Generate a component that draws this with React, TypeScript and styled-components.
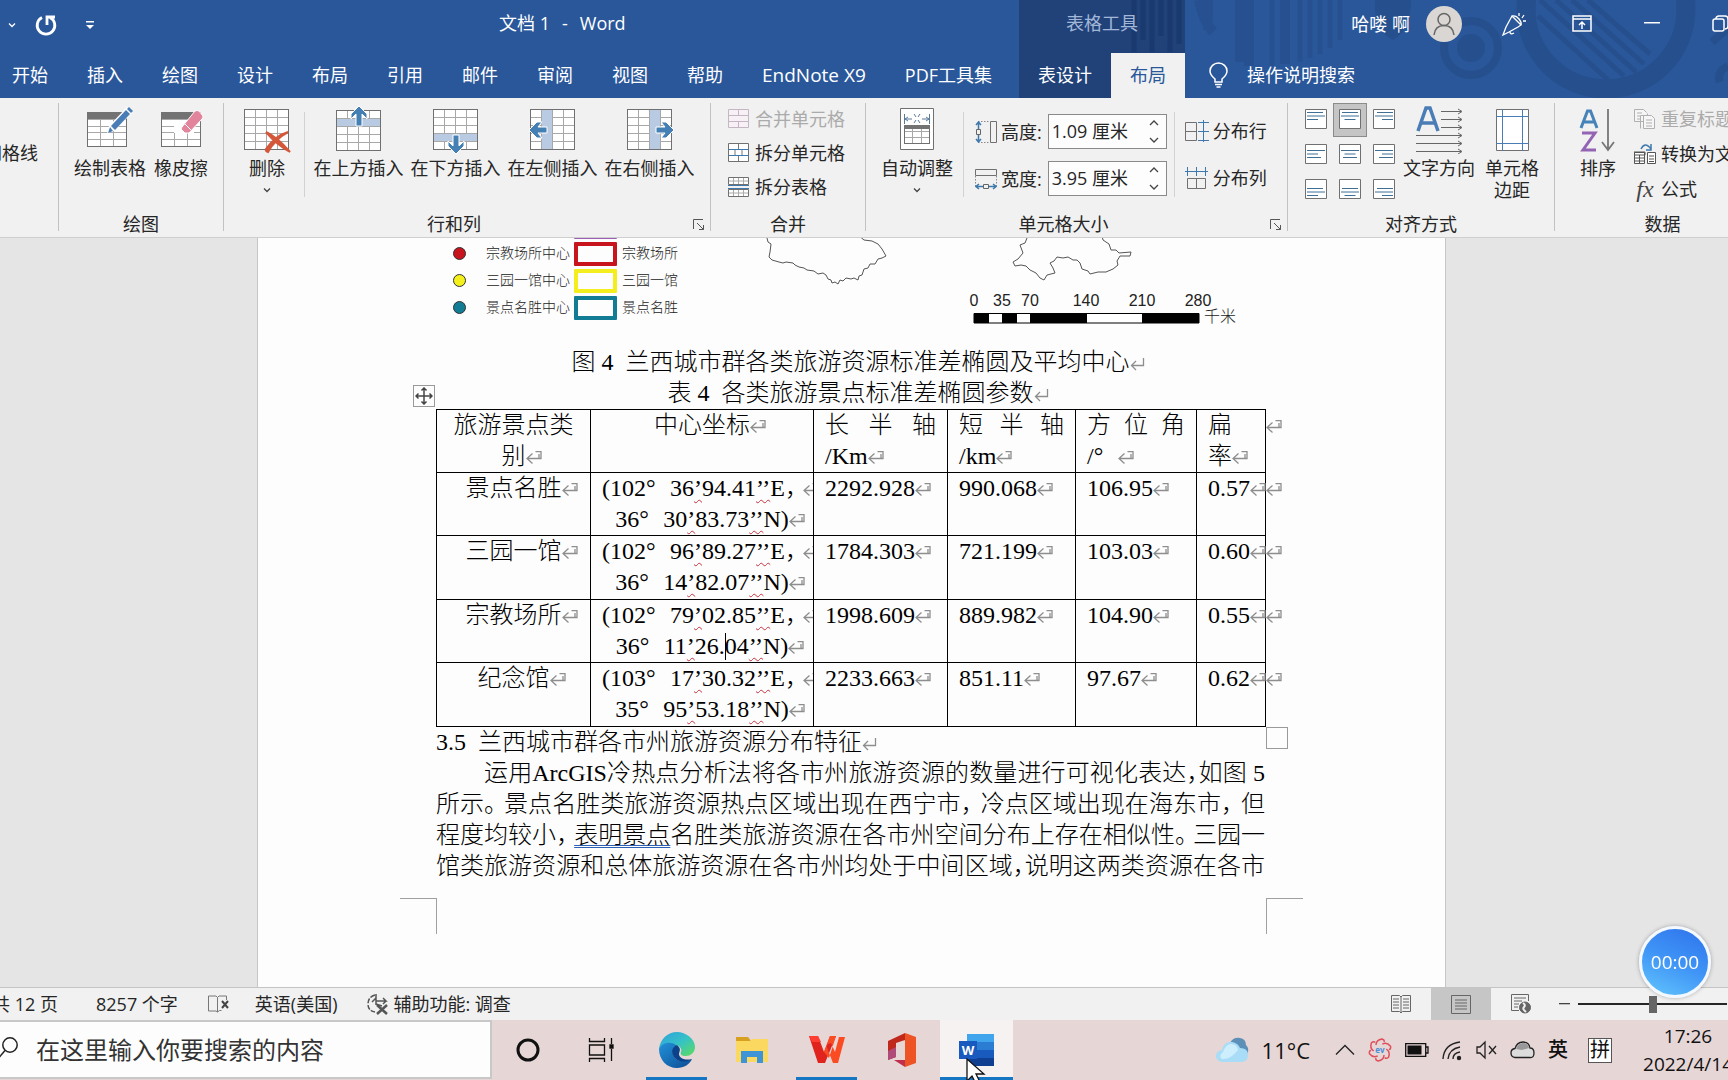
import React from "react";
import styled, { createGlobalStyle, css } from "styled-components";

const ui = `"Open Sans", "Noto Sans CJK SC", sans-serif`;
const serif = `"Liberation Serif", "Noto Sans CJK SC", serif`;

const Global = createGlobalStyle`
  * { box-sizing: border-box; }
  body { margin: 0; overflow: hidden; }
  button { font: inherit; color: inherit; background: none; border: 0; padding: 0; margin: 0; cursor: default; }
  svg { display: block; flex: none; }
`;

const Screen = styled.div`
  display: grid;
  grid-template-rows: auto auto minmax(0, 1fr) auto auto;
  height: 100vh;
  overflow: hidden;
  font: 18px/22px ${ui};
  color: #262626;
`;

/* ---------- title bar and tabs ---------- */

const Header = styled.header`
  position: relative;
  background: #2a579a;
  color: #fff;
  overflow: hidden;
`;
const Pattern = styled.svg`
  position: absolute;
  top: 0;
  right: 0;
`;
const TitleRow = styled.div`
  position: relative;
  display: flex;
  height: 53px;
`;
const QuickAccess = styled.div`
  flex: 0 0 499px;
  display: flex;
  align-items: center;
  gap: 17px;
  padding: 0 0 4px 8px;
`;
const DocTitle = styled.div`
  display: flex;
  gap: 12px;
  flex: 0 0 520px;
  padding-top: 12px;
`;
const ContextTitle = styled.div`
  flex: 0 0 166px;
  padding-top: 12px;
  text-align: center;
  color: #a3b7d8;
  background: rgba(24, 50, 95, 0.55);
`;
const WindowTools = styled.div`
  margin: 0 -4px 0 auto;
  padding-bottom: 6px;
  display: flex;
  align-items: center;
  gap: 52px;
`;
const User = styled.button`
  display: flex;
  align-items: center;
  gap: 16px;
  margin-right: -12px;
`;
const PenIcon = styled.svg`
  overflow: visible;
`;
const TabRow = styled.div`
  position: relative;
  display: flex;
  height: 45px;
`;
const Tabs = styled.nav`
  flex: 0 0 1019px;
  display: flex;
  gap: 39px;
  padding-left: 12px;
`;
const ContextTabs = styled.nav`
  flex: 0 0 166px;
  display: flex;
  background: rgba(24, 50, 95, 0.55);
`;
const Tab = styled.button<{ $wide?: boolean }>`
  white-space: nowrap;
  padding-bottom: 2px;
  ${(p) => p.$wide && css`font-size: 19px;`}
`;
const ContextTab = styled.button<{ $active?: boolean }>`
  flex: 1 1 auto;
  padding-bottom: 2px;
  ${(p) => p.$active && css`background: #f1f1f1; color: #2a579a;`}
`;
const TellMe = styled.button`
  display: flex;
  align-items: center;
  gap: 19px;
  margin-left: 24px;
  padding-bottom: 2px;
`;

/* ---------- ribbon ---------- */

const Ribbon = styled.section`
  display: flex;
  padding: 5px 0 6px;
  background: #f1f1f1;
  border-bottom: 1px solid #cfcfcf;
  overflow: hidden;
`;
const Group = styled.div<{ $w: number }>`
  position: relative;
  flex: 0 0 ${(p) => p.$w}px;
  min-width: 0;
  display: flex;
  flex-direction: column;
  border-right: 1px solid #c2c2c2;
  white-space: nowrap;
`;
const GroupBody = styled.div<{ $pad: number; $end?: boolean }>`
  display: flex;
  align-items: flex-start;
  height: 114px;
  padding-left: ${(p) => p.$pad}px;
  ${(p) => p.$end && css`justify-content: flex-end; align-items: center; padding: 0 20px 14px 0;`}
`;
const GroupName = styled.div<{ $launcher?: boolean }>`
  line-height: 14px;
  text-align: center;
  padding-right: ${(p) => (p.$launcher ? 26 : 0)}px;
`;
const Launcher = styled.button`
  position: absolute;
  right: 5px;
  bottom: 0;
`;
const Big = styled.button<{ $w: number }>`
  flex: 0 0 ${(p) => p.$w}px;
  display: flex;
  flex-direction: column;
  align-items: center;
  padding-top: 3px;
  svg:first-child { margin-bottom: 3px; }
`;
const Split = styled.div<{ $l: number; $r: number }>`
  width: 1px;
  height: 85px;
  margin: 9px ${(p) => p.$r}px 0 ${(p) => p.$l}px;
  background: #d2d2d2;
`;
const Stack = styled.div<{ $gap: number; $ml?: number }>`
  display: grid;
  gap: ${(p) => p.$gap}px;
  margin-left: ${(p) => p.$ml || 0}px;
`;
const Small = styled.button<{ $off?: boolean }>`
  display: flex;
  align-items: center;
  gap: 5px;
  height: 32px;
  color: ${(p) => (p.$off ? "#ababab" : "inherit")};
`;
const SizeGrid = styled.div`
  display: grid;
  gap: 12px;
  padding-top: 11px;
`;
const Field = styled.div`
  display: flex;
  align-items: center;
  height: 35px;
  label { margin: 0 6px 0 4px; }
`;
const Spin = styled.div`
  display: flex;
  width: 119px;
  height: 35px;
  border: 1px solid #8a8a8a;
  background: #fdfdfd;
  input {
    flex: 1;
    min-width: 0;
    border: 0;
    padding: 0 0 2px 3px;
    background: none;
    font: inherit;
    color: inherit;
    outline: 0;
  }
`;
const SpinArrows = styled.div`
  display: grid;
  width: 24px;
  place-items: center;
  button { display: grid; place-items: center; }
`;
const Distribute = styled.button`
  display: flex;
  align-items: center;
  gap: 4px;
  height: 35px;
  padding-bottom: 2px;
`;
const AlignGrid = styled.div`
  display: grid;
  grid-template-columns: repeat(3, 34px);
  grid-auto-rows: 34px;
  row-gap: 1px;
`;
const AlignButton = styled.button<{ $on?: boolean }>`
  display: grid;
  place-items: center;
  padding-bottom: 2px;
  border: 1px solid ${(p) => (p.$on ? "#8c8c8c" : "transparent")};
  background: ${(p) => (p.$on ? "#c5c5c5" : "none")};
`;

/* ---------- document ---------- */

const Workspace = styled.main`
  display: flex;
  justify-content: center;
  padding-right: 25px;
  background: #e5e5e5;
  overflow: hidden;
`;
const Page = styled.article`
  width: 1189px;
  padding: 0 180px 0 178px;
  background: #fdfdfd;
  border: solid #c6c6c6;
  border-width: 0 1px;
  font: 300 24px/31px ${serif};
  color: #000;
`;
const Figure = styled.div`
  display: flex;
  align-items: flex-end;
  height: 109px;
  padding: 0 0 26px 17px;
  overflow: hidden;
`;
const Legend = styled.div`
  display: grid;
  grid-template-columns: 33px 88px 48px auto;
  grid-auto-rows: 27px;
  align-items: center;
  font-size: 14px;
  white-space: nowrap;
  color: #222;
`;
const Dot = styled.i<{ $c: string }>`
  width: 13px;
  height: 13px;
  border-radius: 50%;
  border: 1px solid #333;
  background: ${(p) => p.$c};
`;
const Swatch = styled.i<{ $c: string }>`
  width: 43px;
  height: 24px;
  border: 4px solid ${(p) => p.$c};
  border-radius: 1px;
  grid-column: 3;
`;
const MapDrawing = styled.svg`
  margin: 0 0 -9px 84px;
  overflow: visible;
`;
const FigureEnd = styled.span`
  margin: 0 -18px -14px auto;
`;
const Caption = styled.p`
  margin: 0;
  text-align: center;
  white-space: pre;
`;
const Heading = styled.p`
  margin: 0;
  white-space: pre;
`;
const Paragraph = styled.p`
  margin: 0;
  text-indent: 48px;
  text-align: justify;
  text-align-last: justify;
`;
const Punct = styled.span<{ $w: number }>`
  display: inline-block;
  width: ${(p) => p.$w}px;
  text-indent: 0;
  text-align-last: left;
  white-space: nowrap;
  font-feature-settings: "halt";
`;
const Grammar = styled.span`
  text-decoration: underline double #2c60b4 1px;
  text-underline-offset: 2px;
  text-decoration-skip-ink: none;
`;
const TableBox = styled.div`
  position: relative;
  margin-right: -18px;
`;
const Table = styled.table`
  border-collapse: collapse;
  table-layout: fixed;
  width: 847px;
  th, td {
    height: 63px;
    padding: 0 11px;
    border: 1px solid #000;
    font-weight: 300;
    text-align: left;
    vertical-align: top;
    white-space: nowrap;
  }
  tbody tr:nth-child(even) td { height: 64px; }
  th:first-child, th:nth-child(2), td:nth-child(2) { text-align: center; }
  td:last-child { border: 0; padding: 0; }
`;
const NameHead = styled.th`
  && { white-space: normal; }
  tbody && { text-align: center; }
`;
const Spread = styled.div`
  display: flex;
  justify-content: space-between;
`;
const Degree = styled.span`
  display: inline-block;
  width: 24px;
  text-align: left;
`;
const Misspelt = styled.span`
  text-decoration: underline wavy #c8323c 1px;
  text-underline-offset: 3px;
  text-decoration-skip-ink: none;
`;
const Caret = styled.i`
  display: inline-block;
  width: 1px;
  height: 27px;
  margin-right: -1px;
  vertical-align: -6px;
  background: #000;
`;
const MarkBox = styled.span<{ $cut?: boolean }>`
  display: inline-block;
  width: ${(p) => (p.$cut ? 10 : 16)}px;
  margin-right: -${(p) => (p.$cut ? 10 : 16)}px;
  overflow: hidden;
  text-indent: 0;
  vertical-align: -1px;
`;
const MoveHandle = styled.button`
  position: absolute;
  left: -23px;
  top: -24px;
  width: 22px;
  height: 22px;
  display: grid;
  place-items: center;
  border: 1px solid #9a9a9a;
`;
const ResizeHandle = styled.button`
  position: absolute;
  left: 830px;
  bottom: -22px;
  width: 22px;
  height: 22px;
  border: 1px solid #9a9a9a;
`;
const Crops = styled.div`
  display: flex;
  justify-content: space-between;
  margin: 16px -38px 0 -36px;
`;
const Crop = styled.i<{ $side: "left" | "right" }>`
  width: 37px;
  height: 36px;
  border-top: 1px solid #a0a0a0;
  border-${(p) => p.$side}: 1px solid #a0a0a0;
`;
const Timer = styled.div`
  position: fixed;
  right: 17px;
  bottom: 82px;
  width: 72px;
  height: 72px;
  display: grid;
  place-items: center;
  border: 3px solid #f4f9ff;
  border-radius: 50%;
  background: linear-gradient(205deg, #3179ee 10%, #3f94f6 50%, #5cbcfb 90%);
  box-shadow: 0 0 4px rgba(0, 0, 0, 0.3);
  color: #fff;
  font-size: 19px;
  z-index: 2;
`;

/* ---------- status bar ---------- */

const Status = styled.footer`
  display: flex;
  align-items: center;
  height: 33px;
  border-top: 1px solid #c4c4c4;
  background: #f1f1f1;
  white-space: nowrap;
  overflow: hidden;
`;
const PageCount = styled.button`
  flex: 0 0 58px;
  min-width: 0;
  display: flex;
  justify-content: flex-end;
`;
const StatusItem = styled.button<{ $ml: number }>`
  display: flex;
  align-items: center;
  gap: 4px;
  margin-left: ${(p) => p.$ml}px;
`;
const Views = styled.div`
  display: flex;
  align-self: stretch;
  margin-left: auto;
`;
const View = styled.button<{ $on?: boolean }>`
  width: 60px;
  display: grid;
  place-items: center;
  background: ${(p) => (p.$on ? "#c6c6c6" : "none")};
`;
const ZoomOut = styled.button`
  margin: 0 8px;
`;
const ZoomSlider = styled.input`
  appearance: none;
  width: 149px;
  height: 18px;
  margin: 0 1px 0 0;
  background: linear-gradient(#262626, #262626) center / 100% 2px no-repeat;
  &::-webkit-slider-thumb {
    appearance: none;
    width: 8px;
    height: 17px;
    background: #666;
  }
`;

/* ---------- taskbar ---------- */

const Taskbar = styled.footer`
  display: flex;
  height: 60px;
  background: #e6d6d6;
  overflow: hidden;
`;
const Search = styled.label`
  display: flex;
  align-items: center;
  gap: 18px;
  flex: 0 0 492px;
  height: 59px;
  margin-right: 2px;
  border: solid #c8c8c8;
  border-width: 2px 2px 2px 0;
  background: #fdfdfd;
  overflow: hidden;
  input {
    flex: 1;
    min-width: 0;
    border: 0;
    padding: 0;
    background: none;
    font: 24px/32px ${ui};
    outline: 0;
  }
  input::placeholder { color: #333; opacity: 1; }
  svg { margin: 0 0 6px 0; }
`;
const TaskButton = styled.button<{ $open?: boolean; $on?: boolean; $narrow?: boolean }>`
  position: relative;
  width: ${(p) => (p.$narrow ? 69 : 73)}px;
  margin-right: 2px;
  display: grid;
  place-items: center;
  background: ${(p) => (p.$on ? "#f6f2f2" : "none")};
  ${(p) =>
    (p.$open || p.$on) &&
    css`
      &::after {
        content: "";
        position: absolute;
        bottom: 0;
        left: ${p.$on ? 0 : 6}px;
        right: ${p.$on ? 0 : 6}px;
        height: 3px;
        background: #1576c4;
      }
    `}
`;
const Pointer = styled.svg`
  position: absolute;
  left: 26px;
  top: 38px;
  z-index: 1;
`;
const Tray = styled.div`
  display: flex;
  align-items: center;
  margin: 0 -5px 0 auto;
  gap: 13px;
  color: #111;
`;
const Weather = styled.button`
  display: flex;
  align-items: center;
  gap: 12px;
  margin-right: 12px;
  font-size: 22px;
`;
const Lang = styled.button`
  font-size: 20px;
  font-weight: 500;
`;
const Ime = styled.button`
  width: 24px;
  height: 25px;
  margin-left: 7px;
  border: 1px solid #555;
  background: #fff;
  font-size: 20px;
`;
const Clock = styled.button`
  margin-left: 18px;
  font-size: 19px;
  line-height: 28px;
  text-align: center;
`;

/* ---------- icons ---------- */

const Chevron = ({ up, w = 8, c = "#444", h = 22 }: { up?: boolean; w?: number; c?: string; h?: number }) => (
  <svg width={w + 2} height={h} viewBox={`0 0 ${w + 2} ${h}`} fill="none" stroke={c} strokeWidth="1.3">
    <path
      d={
        up
          ? `M1 ${h / 2 + w / 4}L${w / 2 + 1} ${h / 2 - w / 4}L${w + 1} ${h / 2 + w / 4}`
          : `M1 ${h / 2 - w / 4}L${w / 2 + 1} ${h / 2 + w / 4}L${w + 1} ${h / 2 - w / 4}`
      }
    />
  </svg>
);

const Sheet = ({ x, y, w, h, cols, rows, fill = "#fff" }: any) => {
  const lines = [];
  for (let i = 1; i < cols; i++) lines.push(`M${x + Math.round((w * i) / cols)} ${y}v${h}`);
  for (let i = 1; i < rows; i++) lines.push(`M${x} ${y + Math.round((h * i) / rows)}h${w}`);
  return (
    <g fill="none">
      <rect x={x} y={y} width={w} height={h} fill={fill} />
      <path d={lines.join("")} stroke="#a8a8a8" />
      <rect x={x} y={y} width={w} height={h} stroke="#707070" />
    </g>
  );
};

const Icon48 = ({ children }: { children: React.ReactNode }) => (
  <svg width="48" height="48" viewBox="0 0 48 48">{children}</svg>
);

const DrawTable = () => (
  <Icon48>
    <Sheet x={1.5} y={6.5} w={39} h={34} cols={3} rows={5} />
    <path d="M1 6h40v7H1z" fill="#737373" />
    <path d="M21 27l2-7L41 1l6 5-19 19z" fill="#fff" />
    <path d="M22 27l2-6 3 4zM25 20L40 4l4 4-15 16zM41 3l2-2 4 4-2 2z" fill="#4a7db5" />
  </Icon48>
);
const Eraser = () => (
  <Icon48>
    <Sheet x={4.5} y={6.5} w={39} h={34} cols={3} rows={5} />
    <path d="M4 6h40v7H4z" fill="#737373" />
    <path d="M17 14h20v13H17z" fill="#fff" />
    <path d="M25 21L38 5q2-1 4 0l4 5q0 2-1 3L32 27h-4l-4-4z" fill="#e2849c" stroke="#fff" />
    <path d="M28 18l6 6" stroke="#fff" />
  </Icon48>
);
const DeleteTable = () => (
  <Icon48>
    <Sheet x={1.5} y={3.5} w={44} h={40} cols={4} rows={5} />
    <path d="M23 26q11 5 24 20-14-8-24-20M45 26Q32 33 25 46q-3-1-2-3 9-13 22-17" fill="#d4573a" stroke="#d4573a" strokeWidth="2" />
  </Icon48>
);
const arrowPaths: Record<string, string> = {
  up: "M24 0l8 8v5l-5-5v12h-6V8l-5 5V8z",
  down: "M24 48l8-8v-5l-5 5V29h-6v11l-5-5v5z",
  left: "M0 24l8-8h5l-4 5h9v6H9l4 5H8z",
  right: "M48 24l-8-8h-5l4 5h-9v6h9l-4 5h5z",
};
const InsertIcon = ({ dir }: { dir: "up" | "down" | "left" | "right" }) => (
  <Icon48>
    <Sheet x={1.5} y={dir === "up" ? 4.5 : 3.5} w={44} h={40} cols={4} rows={5} />
    {dir === "up" && <path d="M2 13h43v7H2z" fill="#b9cbe2" />}
    {dir === "down" && <path d="M2 28h43v7H2z" fill="#b9cbe2" />}
    {dir === "left" && <path d="M13 4h10v39H13z" fill="#b9cbe2" />}
    {dir === "right" && <path d="M24 4h10v39H24z" fill="#b9cbe2" />}
    <path d={arrowPaths[dir]} fill="#4580b4" stroke="#fff" strokeWidth="1" />
  </Icon48>
);
const AutoFit = () => (
  <Icon48>
    <path d="M7.5 2.5h33v41h-33z" fill="#fff" stroke="#707070" />
    <Sheet x={11.5} y={19.5} w={25} h={18} cols={3} rows={3} />
    <path d="M11 19h26v4H11z" fill="#737373" />
    <path d="M11.5 8v10M36.5 8v10M12 13h7M36 13h-7M15 11l-3 2 3 2M33 11l3 2-3 2M21 8l2 3M27 8l-2 3M21 17l2-3M27 17l-2-3" fill="none" stroke="#5a7a99" />
  </Icon48>
);
const TextDirection = () => (
  <Icon48>
    <path d="M3 25L11 2h4l8 23M6 17h13" fill="none" stroke="#4a7db5" strokeWidth="3.5" />
    <path d="M26 5.500h20M26 13.500h20M26 21.500h20M1 29.500h45M1 37.500h45M1 45.500h45M43 3l4 2.500-4 2.500M43 11l4 2.500-4 2.500M43 19l4 2.500-4 2.500M43 27l4 2.500-4 2.500M43 35l4 2.500-4 2.500M43 43l4 2.500-4 2.500" fill="none" stroke="#666" />
  </Icon48>
);
const Margins = () => (
  <Icon48>
    <path d="M8.500 3.500h32v41h-32z" fill="#fff" stroke="#707070" />
    <path d="M14.500 3v42M34.500 3v42M8 10.500h33M8 37.500h33" stroke="#4a7db5" />
  </Icon48>
);
const SortIcon = () => (
  <Icon48>
    <path d="M7 22L13.500 5h3L23 22M9.500 16h11" fill="none" stroke="#4583b8" strokeWidth="3" />
    <path d="M8 27h13L9 44h13" fill="none" stroke="#9464b4" strokeWidth="3" />
    <path d="M34 3v40M28 36l6 8 6-8" fill="none" stroke="#777" strokeWidth="1.800" />
  </Icon48>
);

const Icon22 = ({ children, w = 22 }: { children: React.ReactNode; w?: number }) => (
  <svg width={w} height="22" viewBox={`0 0 ${w} 22`} fill="none">{children}</svg>
);
const MergeIcon = () => (
  <Icon22>
    <path d="M.5 1.500h20v18H.5zM.5 7.500h20M.5 13.500h20M10.500 2v5M10.500 14v5" stroke="#c4b6c2" fill="#f7f1f5" />
  </Icon22>
);
const SplitCells = () => (
  <Icon22>
    <path d="M.5 1.500h20v18H.5z" stroke="#707070" fill="#fff" />
    <path d="M10.500 2v5M10.500 14v5M7 8v5M14 8v5" stroke="#777" />
    <path d="M1 7.500h20M1 13.500h20" stroke="#3f78ad" />
  </Icon22>
);
const SplitTable = () => (
  <Icon22>
    <path d="M.5 1.500h20v7H.5zM.5 13.500h20v7H.5z" stroke="#707070" fill="#fff" />
    <path d="M5.500 2v6M10.500 2v6M15.500 2v6M5.500 14v6M10.500 14v6M15.500 14v6M1 5h19M1 17h19" stroke="#aaa" />
    <path d="M0 9.500h21M0 12.500h21" stroke="#3f78ad" />
  </Icon22>
);
const HeightIcon = () => (
  <Icon22>
    <path d="M15.500.5h6v21h-6z" stroke="#707070" />
    <path d="M3 .5h12M3 21.500h12" stroke="#888" strokeDasharray="1.500 1.500" />
    <path d="M3.500 1v7M3.500 14v7M1 4l2.500-3L6 4M1 18l2.500 3L6 18" stroke="#3f78ad" strokeWidth="1.500" />
    <path d="M1.500 8.500h4v5h-4z" stroke="#666" />
  </Icon22>
);
const WidthIcon = () => (
  <Icon22>
    <path d="M.5 1.500h21v6H.5z" stroke="#707070" />
    <path d="M.5 8v10M21.500 8v10" stroke="#888" strokeDasharray="1.500 1.500" />
    <path d="M1 18.500h7M14 18.500h7M4 16l-3 2.500L4 21M18 16l3 2.500-3 2.500" stroke="#3f78ad" strokeWidth="1.500" />
    <path d="M8.500 16.500h5v4h-5z" stroke="#666" />
  </Icon22>
);
const DistRows = () => (
  <Icon22 w={24}>
    <path d="M.5 2.500h11v18H.5zM.5 11.500h11" stroke="#707070" />
    <path d="M18.500 0v22M13 2.500h11M13 11.500h11M13 20.500h11" stroke="#3f78ad" />
  </Icon22>
);
const DistCols = () => (
  <Icon22 w={24}>
    <path d="M2.500 11.500h18v10h-18zM11.500 12v9" stroke="#707070" />
    <path d="M0 4.500h23M2.500 0v9M11.500 0v9M20.500 0v9" stroke="#3f78ad" />
  </Icon22>
);
const RepeatIcon = () => (
  <Icon22>
    <path d="M9 13.500H.5V1.500h9l3 3M6.500 20.500v-13h7V5.500M9.500 7.500h8l3 3v10h-11z" stroke="#b0b0b0" fill="#f6f6f6" />
    <path d="M12 12h6M12 15h6M12 18h6M3 5h5M3 8h3M3 11h3" stroke="#b0b0b0" />
  </Icon22>
);
const ConvertIcon = () => (
  <Icon22>
    <path d="M.5 9.500h10v11H.5zM13.500 9.500h8v11h-8z" stroke="#555" fill="#fff" />
    <path d="M0 9h11v3H0zM1 15h9M1 18h9M5.500 12v8M15 13h5M15 16h5M15 18.500h5" stroke="#555" />
    <path d="M7 6q4-8 10 0M17 1v6h-5" stroke="#3f78ad" strokeWidth="1.500" />
  </Icon22>
);
const FormulaIcon = styled.em`
  width: 22px;
  font: italic 24px/24px "Liberation Serif", serif;
  color: #444;
`;
const AlignIcon = ({ v, h }: { v: number; h: number }) => {
  const top = [3.5, 6.5, 9.5][v];
  const lengths = v === 1 ? [18, 11, 14] : [16, 18, 11];
  return (
    <svg width="22" height="20" viewBox="0 0 22 20" fill="none">
      <path d="M.5.5h21v19H.5z" fill="#fff" stroke="#707070" />
      {lengths.map((len, i) => {
        const x = h === 0 ? 2 : h === 1 ? (22 - len) / 2 : 20 - len;
        return <path key={i} d={`M${x} ${top + i * 3.5}h${len}`} stroke="#3f6f94" />;
      })}
    </svg>
  );
};

const Mark = ({ cell, cut }: { cell?: boolean; cut?: boolean }) => (
  <MarkBox $cut={cut}>
    <svg width="16" height="14" viewBox="0 0 16 14" fill="none" stroke="#8e8e8e" strokeWidth="1.300">
      <path d={cell ? "M6.500 2.500L1 7.500 6.500 12.500M1 7.500h14V.7H9.500M13 3v4" : "M6 4L1.500 8.500 6 13M1.500 8.500h12V1"} />
    </svg>
  </MarkBox>
);

/* ---------- document content ---------- */

type Coord = [string, string, string];
const rows: { name: string; a: Coord; b: Coord; v: string[]; caret?: boolean }[] = [
  { name: "景点名胜", a: ["(102", "36", "94.41"], b: ["36", "30", "83.73"], v: ["2292.928", "990.068", "106.95", "0.57"] },
  { name: "三园一馆", a: ["(102", "96", "89.27"], b: ["36", "14", "82.07"], v: ["1784.303", "721.199", "103.03", "0.60"] },
  { name: "宗教场所", a: ["(102", "79", "02.85"], b: ["36", "11", "26.04"], v: ["1998.609", "889.982", "104.90", "0.55"], caret: true },
  { name: "纪念馆", a: ["(103", "17", "30.32"], b: ["35", "95", "53.18"], v: ["2233.663", "851.11", "97.67", "0.62"] },
];

const Coordinate = ({ c, end, caret }: { c: Coord; end: React.ReactNode; caret?: boolean }) => (
  <div>
    {c[0]}
    <Degree>°</Degree>
    {c[1]}
    <Misspelt>’</Misspelt>
    {caret ? <>{c[2].slice(0, 3)}<Caret />{c[2].slice(3)}</> : c[2]}
    <Misspelt>’’</Misspelt>
    {end}
  </div>
);

const tabs = ["开始", "插入", "绘图", "设计", "布局", "引用", "邮件", "审阅", "视图", "帮助", "EndNote X9", "PDF工具集"];
const alignNames = ["靠上左", "靠上居中", "靠上右", "中部左", "水平居中", "中部右", "靠下左", "靠下居中", "靠下右"];

const LauncherIcon = () => (
  <svg width="12" height="12" viewBox="0 0 12 12" fill="none" stroke="#555">
    <path d="M.5 10V.5H10M4 4l6.500 6.500M10.500 6v4.500H6" />
  </svg>
);

export default function App() {
  return (
    <Screen>
      <Global />
      <Header>
        <Pattern width="600" height="98" viewBox="1128 0 600 98" fill="none">
          <g stroke="#26508f" strokeWidth="5">
            <path d="M1134 0v52M1143 0v40M1152 0v52M1161 0v36M1170 0v52M1179 0v44" stroke="#1d4480" />
            <path d="M1199 0q4 20 14 32M1208 0v30M1240 0v62M1249 0v66M1285 0v64" strokeWidth="10" />
            <path d="M1272 0v66M1300 0v62M1310 0v58M1320 0v54M1330 0v48M1340 0v40" />
          </g>
          <path d="M1375 0q-2 30 18 40 18-10 18-40z" fill="#264f8d" />
          <circle cx="1471" cy="48" r="27" stroke="#264f8d" strokeWidth="8" />
          <circle cx="1471" cy="48" r="14" fill="#264f8d" />
          <circle cx="1606" cy="9" r="80" stroke="#264f8d" strokeWidth="19" />
          <path d="M1540 0l84 76M1556 0l80 72M1572 0l72 64M1588 0l62 54M1538 16l70 64" stroke="#264f8d" strokeWidth="5" />
          <path d="M1728 28l-16 14M1728 66q-12 6-8 16" stroke="#264f8d" strokeWidth="8" />
        </Pattern>
        <TitleRow>
          <QuickAccess>
            <button aria-label="撤消选项"><Chevron w={6} c="#fff" /></button>
            <button aria-label="重复">
              <svg width="24" height="24" viewBox="0 0 24 24" fill="none" stroke="#fff" strokeWidth="2.800">
                <path d="M9 4.500a8.800 8.800 0 1 0 8 0M14 12V4h8" />
              </svg>
            </button>
            <button aria-label="自定义快速访问工具栏">
              <svg width="32" height="12" viewBox="0 0 32 12" fill="#fff">
                <path d="M12 2h8v1.500h-8zM12 6h8l-4 4z" />
              </svg>
            </button>
          </QuickAccess>
          <DocTitle><span>文档 1</span><span>-</span><span>Word</span></DocTitle>
          <ContextTitle>表格工具</ContextTitle>
          <WindowTools>
            <User>
              <span>哈喽 啊</span>
              <svg width="36" height="36" viewBox="0 0 36 36" fill="none" stroke="#666" strokeWidth="1.500">
                <circle cx="18" cy="18" r="18" fill="#d9d6d4" stroke="none" />
                <circle cx="18" cy="13.500" r="6" />
                <path d="M8 29q1-9.500 10-9.500T28 29" />
              </svg>
            </User>
            <button aria-label="即将推出">
              <PenIcon width="18" height="24" viewBox="0 0 18 24" fill="none" stroke="#fff" strokeWidth="1.300">
                <path d="M10 4l9 9-3 2-9 5-6 3 3-8zM10 4q4-1 7 3t2 6M17 4V1M20 6l2-3M21 9h3M8 20q0 3 4 1" />
              </PenIcon>
            </button>
            <button aria-label="功能区显示选项">
              <svg width="20" height="18" viewBox="0 0 20 18" fill="none" stroke="#fff" strokeWidth="1.500">
                <path d="M1 1h18v15H1zM1 4h18M10 14V7M7 10l3-3 3 3" />
              </svg>
            </button>
            <button aria-label="最小化">
              <svg width="16" height="18" viewBox="0 0 16 18"><path d="M0 7h16v1.500H0z" fill="#fff" /></svg>
            </button>
            <button aria-label="还原">
              <svg width="20" height="18" viewBox="0 0 20 18" fill="none" stroke="#fff" strokeWidth="1.500">
                <rect x="1" y="4" width="11" height="12" rx="2" />
                <path d="M4 4q0-3 3-3h6q3 0 3 3v7q0 3-3 3" />
              </svg>
            </button>
          </WindowTools>
        </TitleRow>
        <TabRow>
          <Tabs>
            {tabs.map((t) => <Tab key={t} $wide={t.length > 8}>{t}</Tab>)}
          </Tabs>
          <ContextTabs>
            <ContextTab>表设计</ContextTab>
            <ContextTab $active>布局</ContextTab>
          </ContextTabs>
          <TellMe>
            <svg width="19" height="26" viewBox="0 0 19 26" fill="none" stroke="#fff" strokeWidth="1.500">
              <path d="M6 20v-3Q1 13 1 9a8.500 8 0 0 1 17 0q0 4-5 8v3zM6 22.500h7M7.500 25h4" />
            </svg>
            操作说明搜索
          </TellMe>
        </TabRow>
      </Header>

      <Ribbon>
        <Group $w={59}>
          <GroupBody $pad={0} $end>网格线</GroupBody>
        </Group>
        <Group $w={165}>
          <GroupBody $pad={11}>
            <Big $w={80}><DrawTable />绘制表格</Big>
            <Big $w={62}><Eraser />橡皮擦</Big>
          </GroupBody>
          <GroupName>绘图</GroupName>
        </Group>
        <Group $w={487}>
          <GroupBody $pad={19}>
            <Big $w={48}><DeleteTable />删除<Chevron w={6} /></Big>
            <Split $l={13} $r={5} />
            <Big $w={97}><InsertIcon dir="up" />在上方插入</Big>
            <Big $w={97}><InsertIcon dir="down" />在下方插入</Big>
            <Big $w={97}><InsertIcon dir="left" />在左侧插入</Big>
            <Big $w={97}><InsertIcon dir="right" />在右侧插入</Big>
          </GroupBody>
          <GroupName $launcher>行和列</GroupName>
          <Launcher aria-label="行和列设置"><LauncherIcon /></Launcher>
        </Group>
        <Group $w={155}>
          <GroupBody $pad={17}>
            <Stack $gap={2}>
              <Small $off><MergeIcon />合并单元格</Small>
              <Small><SplitCells />拆分单元格</Small>
              <Small><SplitTable />拆分表格</Small>
            </Stack>
          </GroupBody>
          <GroupName>合并</GroupName>
        </Group>
        <Group $w={422}>
          <GroupBody $pad={12}>
            <Big $w={78}><AutoFit />自动调整<Chevron w={6} /></Big>
            <Split $l={7} $r={11} />
            <SizeGrid>
              {[["高度:", "1.09 厘米", "h"], ["宽度:", "3.95 厘米", "w"]].map(([l, v, id]) => (
                <Field key={id}>
                  {id === "h" ? <HeightIcon /> : <WidthIcon />}
                  <label htmlFor={id}>{l}</label>
                  <Spin>
                    <input id={id} defaultValue={v} />
                    <SpinArrows>
                      <button aria-label="增加"><Chevron up w={8} h={14} /></button>
                      <button aria-label="减少"><Chevron w={8} h={14} /></button>
                    </SpinArrows>
                  </Spin>
                </Field>
              ))}
            </SizeGrid>
            <Split $l={7} $r={10} />
            <SizeGrid>
              <Distribute><DistRows />分布行</Distribute>
              <Distribute><DistCols />分布列</Distribute>
            </SizeGrid>
          </GroupBody>
          <GroupName $launcher>单元格大小</GroupName>
          <Launcher aria-label="单元格大小设置"><LauncherIcon /></Launcher>
        </Group>
        <Group $w={267}>
          <GroupBody $pad={11}>
            <AlignGrid>
              {alignNames.map((n, i) => (
                <AlignButton key={n} aria-label={n} $on={i === 1}>
                  <AlignIcon v={Math.floor(i / 3)} h={i % 3} />
                </AlignButton>
              ))}
            </AlignGrid>
            <Big $w={76}><TextDirection />文字方向</Big>
            <Big $w={70}><Margins /><span>单元格<br />边距</span></Big>
          </GroupBody>
          <GroupName>对齐方式</GroupName>
        </Group>
        <Group $w={216}>
          <GroupBody $pad={15}>
            <Big $w={56}><SortIcon />排序</Big>
            <Stack $gap={3} $ml={8}>
              <Small $off><RepeatIcon />重复标题</Small>
              <Small><ConvertIcon />转换为文</Small>
              <Small><FormulaIcon>fx</FormulaIcon>公式</Small>
            </Stack>
          </GroupBody>
          <GroupName>数据</GroupName>
        </Group>
      </Ribbon>

      <Workspace>
        <Page>
          <Figure>
            <Legend>
              <Swatch $c="#9a5fb4" />
              <span />
              <Dot $c="#c8141c" /><span>宗教场所中心</span><Swatch $c="#c8141c" /><span>宗教场所</span>
              <Dot $c="#f4f01c" /><span>三园一馆中心</span><Swatch $c="#f4ee1e" /><span>三园一馆</span>
              <Dot $c="#127c94" /><span>景点名胜中心</span><Swatch $c="#127c94" /><span>景点名胜</span>
            </Legend>
            <MapDrawing width="480" height="92" viewBox="762 238 480 92">
              <g fill="none" stroke="#555">
                <path d="M767 238l1 4 3 2-1 8-1 5 3 3 7 2 4 1 3-1 7 1 2 2 4 2 5 1 3 2 7 1 4 3 5-1 3 2 2 4 3 1 1 3 3-1 3 2 2-4 3 1 3-3 5 1 3-1 4 2 1-4 3-1 2-6 4-1 2-4 5 0 3-5 4-1 4-2-4-7-4-5-6-3-8-1-6-5" />
                <path d="M1027 238l-2 5-5 2 3 8-5 6-5 3 2 4 6-1 5 1 4 4 6 3 4 5 4 2 3-5 8-2-2-5-3-5 4-2 3-4 6 1 5-1 5 3 4 0 3 3 2 6 6 2 2 3 8-2 8 0 7-3 5-4-1-4 3-5 10 0 1-4-12 1-3-3-5 0-2-6-6-4-1-4" />
              </g>
              <path d="M974 313.500h225v9.500H974z" fill="#fff" stroke="#000" />
              <path d="M974 313h15v10h-15zM1002 313h15v10h-15zM1030 313h57v10h-57zM1142 313h57v10h-57z" />
              <g fontFamily="Liberation Sans, Arial, sans-serif" fontSize="16" textAnchor="middle" fill="#222">
                <text x="974" y="306">0</text>
                <text x="1002" y="306">35</text>
                <text x="1030" y="306">70</text>
                <text x="1086" y="306">140</text>
                <text x="1142" y="306">210</text>
                <text x="1198" y="306">280</text>
              </g>
              <text x="1204" y="322" fontFamily="Noto Sans CJK SC, sans-serif" fontSize="16" fill="#222">千米</text>
            </MapDrawing>
            <FigureEnd><Mark /></FigureEnd>
          </Figure>
          <Caption>{"图 4  兰西城市群各类旅游资源标准差椭圆及平均中心"}<Mark /></Caption>
          <Caption>{"表 4  各类旅游景点标准差椭圆参数"}<Mark /></Caption>
          <TableBox>
            <MoveHandle aria-label="移动表格">
              <svg width="18" height="18" viewBox="0 0 18 18" fill="none" stroke="#444" strokeWidth="1.500">
                <path d="M9 1v16M1 9h16M6.500 3.500L9 1l2.500 2.500M6.500 14.500L9 17l2.500-2.500M3.500 6.500L1 9l2.500 2.500M14.500 6.500L17 9l-2.500 2.500" />
              </svg>
            </MoveHandle>
            <Table>
              <colgroup>
                <col style={{ width: 154 }} /><col style={{ width: 223 }} /><col style={{ width: 134 }} />
                <col style={{ width: 128 }} /><col style={{ width: 121 }} /><col style={{ width: 69 }} /><col style={{ width: 18 }} />
              </colgroup>
              <thead>
                <tr>
                  <NameHead>旅游景点类别<Mark cell /></NameHead>
                  <th>中心坐标<Mark cell /></th>
                  <th><Spread><span>长</span><span>半</span><span>轴</span></Spread>/Km<Mark cell /></th>
                  <th><Spread><span>短</span><span>半</span><span>轴</span></Spread>/km<Mark cell /></th>
                  <th><Spread><span>方</span><span>位</span><span>角</span></Spread>/<Degree>°</Degree><Mark cell /></th>
                  <th>扁<br />率<Mark cell /></th>
                  <td><Mark cell /></td>
                </tr>
              </thead>
              <tbody>
                {rows.map((r) => (
                  <tr key={r.name}>
                    <NameHead scope="row">{r.name}<Mark cell /></NameHead>
                    <td>
                      <Coordinate c={r.a} end={<>E<Punct $w={18}>，</Punct><Mark cell cut /></>} />
                      <Coordinate c={r.b} caret={r.caret} end={<>N)<Mark cell /></>} />
                    </td>
                    {r.v.map((v) => <td key={v}>{v}<Mark cell /></td>)}
                    <td><Mark cell /></td>
                  </tr>
                ))}
              </tbody>
            </Table>
            <ResizeHandle aria-label="调整表格大小" />
          </TableBox>
          <Heading>{"3.5  兰西城市群各市州旅游资源分布特征"}<Mark /></Heading>
          <Paragraph>
            运用ArcGIS冷热点分析法将各市州旅游资源的数量进行可视化表达<Punct $w={12}>，</Punct>如图 5<br />
            所示<Punct $w={20}>。</Punct>景点名胜类旅游资源热点区域出现在西宁市<Punct $w={20}>，</Punct>冷点区域出现在海东市<Punct $w={20}>，</Punct>但<br />
            程度均较小<Punct $w={18}>，</Punct><Grammar>表明景点</Grammar>名胜类旅游资源在各市州空间分布上存在相似性<Punct $w={18}>。</Punct>三园一<br />
            馆类旅游资源和总体旅游资源在各市州均处于中间区域<Punct $w={12}>，</Punct>说明这两类资源在各市
          </Paragraph>
          <Crops><Crop $side="right" /><Crop $side="left" /></Crops>
        </Page>
        <Timer>00:00</Timer>
      </Workspace>

      <Status>
        <PageCount>共 12 页</PageCount>
        <StatusItem $ml={38}>8257 个字</StatusItem>
        <StatusItem $ml={30} aria-label="校对">
          <svg width="21" height="19" viewBox="0 0 21 19" fill="none" stroke="#777">
            <path d="M9.500 17V2.500L8 1H.5v15H8zM9.500 2.500L11 1h7.500v4M9.500 17l2-1.500h2" />
            <path d="M14 6l6 7M20 6l-6 7" stroke="#444" strokeWidth="2" />
          </svg>
        </StatusItem>
        <StatusItem $ml={26}>英语(美国)</StatusItem>
        <StatusItem $ml={30}>
          <svg width="22" height="22" viewBox="0 0 22 22" fill="none" stroke="#555" strokeWidth="1.500">
            <path d="M8 2Q1 4 1 11t7 8" strokeDasharray="5 1.500" />
            <path d="M9 1v11M5 9l4-4M9 8h10l-3-3M9 11l6 2M16 11l3-3" />
            <path d="M10 12l10 9M20 12l-10 9" strokeWidth="2.500" />
          </svg>
          辅助功能: 调查
        </StatusItem>
        <Views>
          <View aria-label="阅读视图">
            <svg width="20" height="19" viewBox="0 0 20 19" fill="none" stroke="#666">
              <path d="M10 18V2L8.500.5H.5v16h8zM10 2L11.500.5h8v16h-8L10 18M2 4h6M2 7h6M2 10h6M2 13h6M12 4h6M12 7h6M12 10h6M12 13h6" />
            </svg>
          </View>
          <View $on aria-label="页面视图">
            <svg width="20" height="19" viewBox="0 0 20 19" fill="none" stroke="#666">
              <path d="M.5.5h19v18H.5zM4 5h12M4 8h12M4 11h12M4 14h12" />
            </svg>
          </View>
          <View aria-label="Web 版式视图">
            <svg width="20" height="20" viewBox="0 0 20 20" fill="none" stroke="#666">
              <path d="M8 16.500H.5V.5h17V7M3 4h12M3 7h8M3 10h5M3 13h4" />
              <circle cx="14" cy="13.500" r="5.500" fill="#666" />
              <path d="M12 9q3 2 1 4t2 5" stroke="#f1f1f1" strokeWidth="2" />
            </svg>
          </View>
        </Views>
        <ZoomOut aria-label="缩小">
          <svg width="11" height="10" viewBox="0 0 11 10"><path d="M0 4h11v1.300H0z" fill="#444" /></svg>
        </ZoomOut>
        <ZoomSlider type="range" aria-label="缩放" min={0} max={100} defaultValue={50} />
      </Status>

      <Taskbar>
        <Search>
          <svg width="18" height="22" viewBox="0 0 18 22" fill="none" stroke="#222" strokeWidth="1.500">
            <circle cx="10" cy="9" r="7.200" />
            <path d="M5 14.500l-6 7" />
          </svg>
          <input aria-label="搜索" placeholder="在这里输入你要搜索的内容" />
        </Search>
        <TaskButton $narrow aria-label="Cortana">
          <svg width="26" height="26" viewBox="0 0 26 26"><circle cx="12" cy="13" r="10" fill="none" stroke="#111" strokeWidth="3" /></svg>
        </TaskButton>
        <TaskButton aria-label="任务视图">
          <svg width="28" height="24" viewBox="0 0 28 24" fill="none" stroke="#111" strokeWidth="1.300">
            <path d="M1.500 0v3.500h15V0M1.500 24v-3.500h15V24M1.500 7h15v10h-15zM23.500 0v6M23.500 11v12" />
            <path d="M22 7h3v3h-3z" fill="#111" />
          </svg>
        </TaskButton>
        <TaskButton $open aria-label="Edge">
          <svg width="36" height="36" viewBox="0 0 36 36">
            <defs>
              <linearGradient id="e1" x1="0" y1="0" x2="1" y2="1"><stop offset="0" stopColor="#2f9fdc" /><stop offset=".5" stopColor="#35c1c8" /><stop offset="1" stopColor="#5fdc5a" /></linearGradient>
              <linearGradient id="e2" x1="0" y1="0" x2="1" y2="1"><stop offset="0" stopColor="#2291d8" /><stop offset="1" stopColor="#0d4c94" /></linearGradient>
            </defs>
            <path d="M0 17C1 7 9 0 18 0s18 7 18 15c0 6-5 9-9 9-5 0-6-2-5-4s0-6-5-7c-7-1-15 2-17 4" fill="url(#e1)" />
            <path d="M0 17c3-7 12-8 17-4 4 3-4 3-3 9 1 7 10 9 19 5-2 5-8 9-15 9C8 36 0 28 0 17" fill="url(#e2)" />
            <path d="M18 13c-4 2-6 5-4 10 2 6 11 9 19 4-9 2-13-2-13-5 0-2 3-5-2-9" fill="#0c428a" />
          </svg>
        </TaskButton>
        <TaskButton aria-label="文件资源管理器">
          <svg width="34" height="28" viewBox="0 0 34 28">
            <path d="M1 1h12l3 4H1z" fill="#d8a021" />
            <path d="M1 5l14 0 2-2h16v23H1z" fill="#fbd860" />
            <path d="M6 15h22v12h-6v-6h-10v6H6z" fill="#3f94d6" />
          </svg>
        </TaskButton>
        <TaskButton $open aria-label="WPS">
          <svg width="36" height="28" viewBox="0 0 36 28">
            <path d="M0 0h9l6 16 6-16h6L16 27H9z" fill="#e0231c" />
            <path d="M15 16l6-16h6l-7 22zM17 9l7 18h5L36 1h-6l-4 15-4-9z" fill="#fb4b22" />
            <path d="M0 0l3 6h9L9 0z" fill="#ff3d33" />
          </svg>
        </TaskButton>
        <TaskButton aria-label="Office">
          <svg width="28" height="34" viewBox="0 0 28 34">
            <path d="M0 8L17 0v7l-9 3v14l-8 3z" fill="#c0281c" />
            <path d="M0 18v9l8-3V14z" fill="#b04a78" />
            <path d="M17 0l11 4v26l-11 4z" fill="#ee5326" />
            <path d="M17 34L6 27h11z" fill="#c22f4c" />
          </svg>
        </TaskButton>
        <TaskButton $on aria-label="Word">
          <svg width="36" height="34" viewBox="0 0 36 34">
            <path d="M8 1h27v8H8z" fill="#41a5ee" />
            <path d="M8 9h27v8H8z" fill="#2b7cd3" />
            <path d="M8 17h27v8H8z" fill="#185abd" />
            <path d="M8 25h27v8H8z" fill="#103f91" />
            <path d="M0 8h18v18H0z" fill="#185abd" />
            <text x="9" y="22" textAnchor="middle" fontFamily="Open Sans, sans-serif" fontWeight="700" fontSize="13" fill="#fff">W</text>
          </svg>
          <Pointer width="20" height="26" viewBox="0 0 20 26">
            <path d="M1 1v22l5-5 4 8 4-2-4-8h8z" fill="#fff" stroke="#111" strokeWidth="1.300" />
          </Pointer>
        </TaskButton>
        <Tray>
          <Weather>
            <svg width="34" height="26" viewBox="0 0 34 26">
              <path d="M14 6q3-6 10-5 6 1 6 7 4 4 1 9l-9 2z" fill="#5c90b8" />
              <path d="M6 25q-6-1-6-6t6-6q2-9 10-8 6 1 8 6 8 0 8 7t-7 7z" fill="#a9dcf6" />
              <path d="M6 22q-4-3 1-7 3-8 8-8 6 0 7 6-8 10-16 9" fill="#cdeefc" />
            </svg>
            11°C
          </Weather>
          <button aria-label="显示隐藏的图标"><Chevron up w={18} c="#222" /></button>
          <button aria-label="EV">
            <svg width="24" height="24" viewBox="0 0 24 24" fill="none" stroke="#e0505c" strokeWidth="1.500">
              {[0, 60, 120, 180, 240, 300].map((a) => <path key={a} d="M8 7q0-5 6-6 3 1 2 3" transform={`rotate(${a} 12 12)`} />)}
              <text x="12" y="15" textAnchor="middle" fontFamily="Open Sans, sans-serif" fontSize="8" fontWeight="700" fill="#4a8ed8" stroke="none">ev</text>
            </svg>
          </button>
          <button aria-label="电池">
            <svg width="24" height="14" viewBox="0 0 24 14"><path d="M.7.7h20v12.600h-20zM21 4h2v6h-2" fill="none" stroke="#111" strokeWidth="1.300" /><path d="M2.500 2.500h14v9h-14z" fill="#111" /></svg>
          </button>
          <button aria-label="网络">
            <svg width="21" height="21" viewBox="0 0 21 21" fill="none" stroke="#222" strokeWidth="1.400">
              <path d="M1 19Q2 4 18 2M6 19Q7 9 18 7M11 19q0-6 7-7" />
              <circle cx="17" cy="18" r="1.500" fill="#222" />
            </svg>
          </button>
          <button aria-label="静音">
            <svg width="21" height="20" viewBox="0 0 21 20" fill="none" stroke="#222" strokeWidth="1.300">
              <path d="M1 7h3l5-5v16l-5-5H1zM13 6l7 8M20 6l-7 8" />
            </svg>
          </button>
          <button aria-label="OneDrive">
            <svg width="25" height="18" viewBox="0 0 25 18">
              <path d="M5 16.500Q1 16 1 12t4-4.500Q7 1 13 1t7 6q4 0 4 5t-4 4.500z" fill="#dcdcdc" stroke="#222" strokeWidth="1.300" />
              <path d="M6 8q2-6 7-6t6 5l-7 2z" fill="#999" />
            </svg>
          </button>
          <Lang>英</Lang>
          <Ime>拼</Ime>
          <Clock>17:26<br />2022/4/14</Clock>
        </Tray>
      </Taskbar>
    </Screen>
  );
}
